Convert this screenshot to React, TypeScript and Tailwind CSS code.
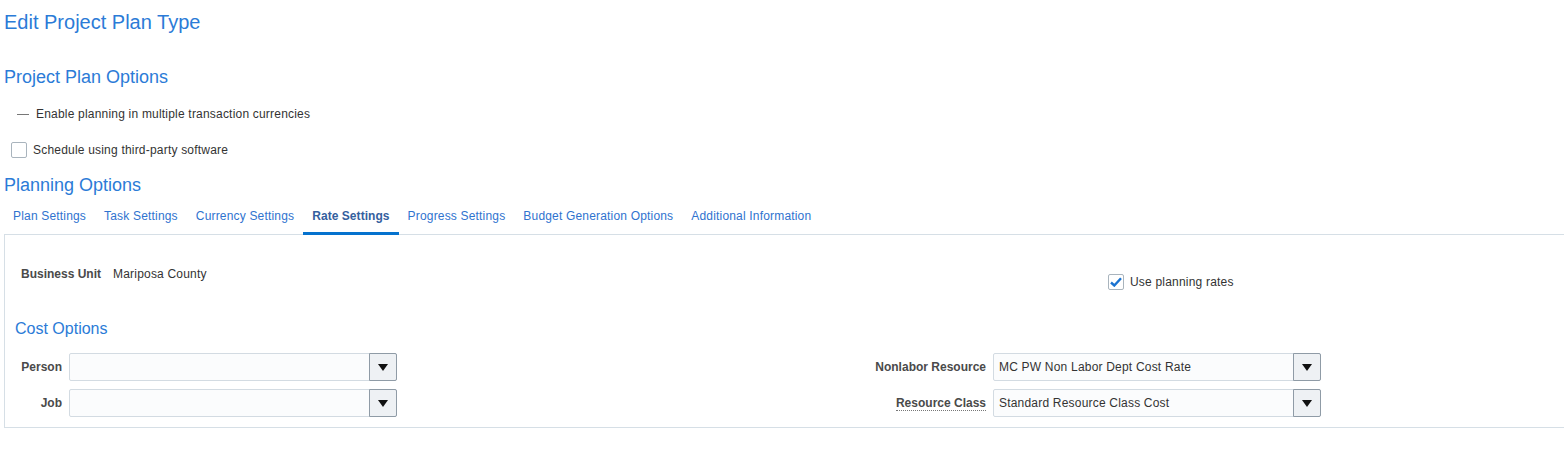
import React from "react";

const tabs = [
  "Plan Settings",
  "Task Settings",
  "Currency Settings",
  "Rate Settings",
  "Progress Settings",
  "Budget Generation Options",
  "Additional Information",
];

function Caret() {
  return (
    <svg width="10" height="7" viewBox="0 0 10 7">
      <path d="M0 0h10L5 7z" fill="#111" />
    </svg>
  );
}

function Choice({ value, label, underline }: { value?: string; label: string; underline?: boolean }) {
  return (
    <div className="flex items-center h-[28px]">
      <label
        className={
          "font-bold text-[12px] text-[#4a4a4a] text-right mr-[7px] " +
          (underline ? "border-b border-dotted border-[#777] leading-[14px]" : "")
        }
      >
        {label}
      </label>
      <div className="flex h-[28px] w-[328px] rounded-[2px] border border-[#d3dbe2] bg-[#fbfcfd]">
        <div className="flex-1 flex items-center px-[5px] text-[12px] tracking-[0.2px] text-[#333]">{value}</div>
        <div className="w-[28px] -my-px -mr-px flex items-center justify-center rounded-r-[2px] border border-[#8f9ba6] bg-[#eef1f4]">
          <Caret />
        </div>
      </div>
    </div>
  );
}

export default function App() {
  return (
    <div className="bg-white w-[1564px] h-[470px] overflow-hidden font-['Liberation_Sans',Arial,sans-serif] text-[#333]">
      <h1 className="pl-[4px] pt-[10px] text-[20px] leading-[24px] text-[#2b7bd7]">Edit Project Plan Type</h1>
      <h2 className="pl-[4px] mt-[32px] text-[18px] leading-[22px] text-[#2b7bd7]">Project Plan Options</h2>
      <div className="flex items-center mt-[18px] h-[16px] text-[12px] tracking-[0.2px] text-[#333]">
        <span className="ml-[17px] w-[12px] h-px bg-[#777]" />
        <span className="ml-[7px]">Enable planning in multiple transaction currencies</span>
      </div>
      <div className="flex items-center mt-[20px] h-[16px] text-[12px] tracking-[0.2px] text-[#333]">
        <span className="ml-[11px] w-[16px] h-[16px] rounded-[2px] border border-[#a9b4bd] bg-white" />
        <span className="ml-[6px]">Schedule using third-party software</span>
      </div>
      <h2 className="pl-[4px] mt-[16px] text-[18px] leading-[22px] text-[#2b7bd7]">Planning Options</h2>
      <div className="flex pl-[4px] mt-[9px]">
        {tabs.map((t) => (
          <div
            key={t}
            className={
              "px-[9px] pt-[4px] pb-[9px] text-[12px] leading-[14px] border-b-[3px] " +
              (t === "Rate Settings"
                ? "border-[#0572ce] font-bold tracking-[0.05px] text-[#34609e]"
                : "border-transparent tracking-[0.18px] text-[#2f73cf]")
            }
          >
            {t}
          </div>
        ))}
      </div>
      <div className="ml-[4px] -mr-[4px] border border-[#d6dfe6] h-[194px] -mt-px">
        <div className="flex items-start pt-[30px]">
          <div className="flex w-[1103px] text-[12px] pl-[16px]">
            <span className="font-bold text-[#4a4a4a]">Business Unit</span>
            <span className="ml-[12px] text-[#333] tracking-[0.2px]">Mariposa County</span>
          </div>
          <div className="flex items-center mt-[8px] text-[12px] tracking-[0.2px]">
            <span className="w-[16px] h-[16px] rounded-[2px] border border-[#a9b4bd] bg-white flex items-center justify-center">
              <svg width="12" height="10" viewBox="0 0 12 10">
                <path d="M1 5.5l3.3 3L11 1.2" fill="none" stroke="#1a73d1" strokeWidth="2.4" />
              </svg>
            </span>
            <span className="ml-[6px]">Use planning rates</span>
          </div>
        </div>
        <h3 className="pl-[10px] mt-[28px] text-[16px] leading-[20px] text-[#2b7bd7]">Cost Options</h3>
        <div className="flex mt-[14px]">
          <div className="flex flex-col gap-[8px] w-[392px] items-end">
            <Choice label="Person" />
            <Choice label="Job" />
          </div>
          <div className="flex flex-col gap-[8px] items-end w-[924px]">
            <Choice label="Nonlabor Resource" value="MC PW Non Labor Dept Cost Rate" />
            <Choice label="Resource Class" value="Standard Resource Class Cost" underline />
          </div>
        </div>
      </div>
    </div>
  );
}
